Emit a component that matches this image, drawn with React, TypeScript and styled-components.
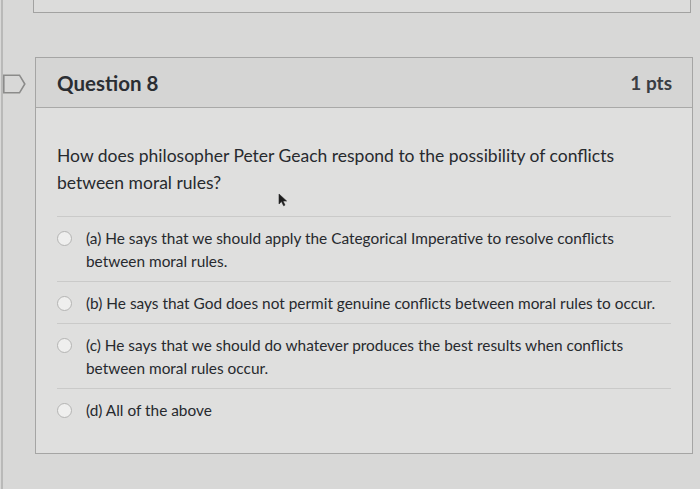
import React from "react";
import styled, { createGlobalStyle } from "styled-components";

const Global = createGlobalStyle`
  html, body { margin: 0; padding: 0; }
  body {
    background: #d8d8d7;
    font-family: Lato, "Noto Sans", "Liberation Sans", sans-serif;
    color: #2f3338;
    width: 700px;
    height: 489px;
    overflow: hidden;
  }
`;

const Page = styled.div`
  position: relative;
  display: flex;
  height: 489px;
  border-left: 2px solid #b9b9b8;
  margin-left: 1px;
`;

const Gutter = styled.div`
  width: 32px;
  flex: none;
  display: flex;
  flex-direction: column;
`;

const Flag = styled.svg`
  margin-top: 74px;
`;

const Main = styled.div`
  flex: 1;
  display: flex;
  flex-direction: column;
  padding-right: 7px;
`;

const TopCard = styled.div`
  height: 12px;
  border: 1px solid #a2a2a1;
  border-top: none;
  background: #dcdcdb;
  margin-left: -2px;
  margin-right: 2px;
`;

const Card = styled.section`
  margin-top: 44px;
  border: 1px solid #a5a5a4;
  background: #dfdfde;
  display: flex;
  flex-direction: column;
`;

const Header = styled.header`
  height: 49px;
  display: flex;
  align-items: center;
  justify-content: space-between;
  padding: 0 20px 0 21px;
  background: #d5d5d4;
  border-bottom: 1px solid #a9a9a8;
`;

const Title = styled.h2`
  margin: 0;
  font-size: 20.5px;
  font-weight: 700;
  color: #2b2e33;
`;

const Points = styled.span`
  font-size: 19px;
  font-weight: 700;
  color: #3a3d42;
`;

const Body = styled.div`
  padding: 34px 21px 23px;
`;

const Question = styled.p`
  margin: 0 0 20px;
  max-width: 590px;
  font-size: 17.5px;
  line-height: 27px;
  color: #272a2e;
`;

const Answers = styled.div`
  display: flex;
  flex-direction: column;
`;

const Answer = styled.label`
  display: flex;
  align-items: flex-start;
  gap: 14px;
  padding: 10px 0 8px;
  border-top: 1px solid #cacac9;
  font-size: 15.4px;
  line-height: 23px;
  color: #272a2e;
`;

const Radio = styled.span`
  flex: none;
  width: 13px;
  height: 13px;
  margin-top: 4px;
  border-radius: 50%;
  border: 1px solid #b4b4b3;
  background: #efefee;
`;

const AnswerText = styled.span`
  flex: 1;
  max-width: 576px;
`;

const Cursor = styled.svg`
  position: absolute;
  left: 275px;
  top: 193px;
`;

const answers = [
  "(a) He says that we should apply the Categorical Imperative to resolve conflicts between moral rules.",
  "(b) He says that God does not permit genuine conflicts between moral rules to occur.",
  "(c) He says that we should do whatever produces the best results when conflicts between moral rules occur.",
  "(d) All of the above",
];

export default function App() {
  return (
    <>
      <Global />
      <Page>
        <Gutter>
          <Flag width="24" height="20" viewBox="0 0 24 20">
            <path d="M0.8 1.2 H16.5 L21.8 10 L16.5 18.8 H0.8 Z" fill="none" stroke="#8b8b8a" strokeWidth="1.6" />
          </Flag>
        </Gutter>
        <Main>
          <TopCard />
          <Card>
            <Header>
              <Title>Question 8</Title>
              <Points>1 pts</Points>
            </Header>
            <Body>
              <Question>
                How does philosopher Peter Geach respond to the possibility of conflicts between moral rules?
              </Question>
              <Answers>
                {answers.map((a) => (
                  <Answer key={a}>
                    <Radio />
                    <AnswerText>{a}</AnswerText>
                  </Answer>
                ))}
              </Answers>
            </Body>
          </Card>
        </Main>
        <Cursor width="10" height="14" viewBox="0 0 10 14">
          <path d="M1 1 L1 11 L3.5 8.6 L5.6 12.8 L7 12.1 L5 8 L8.6 8 Z" fill="#1d1d1d" stroke="#2a2a2a" strokeWidth="0.6" />
        </Cursor>
      </Page>
    </>
  );
}
